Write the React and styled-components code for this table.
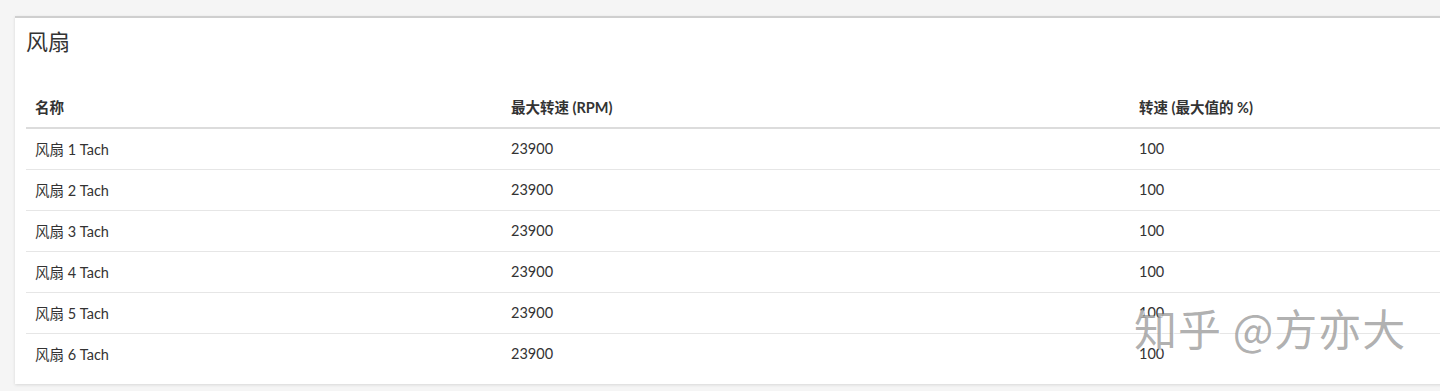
import styled, { createGlobalStyle } from "styled-components";

const GlobalStyle = createGlobalStyle`
    body {
        margin: 0;
        background: #f5f5f5;
        font-family: Lato, "Noto Sans CJK SC", sans-serif;
        color: #333;
    }
`

const fans = [1, 2, 3, 4, 5, 6].map((n) => ({
    name: `风扇 ${n} Tach`,
    max: 23900,
    speed: 100,
}))

const App = () => {
    return (
        <Page>
            <GlobalStyle />
            <Panel>
                <Title>风扇</Title>
                <Table>
                    <thead>
                        <tr>
                            <HeadCell width={476}>名称</HeadCell>
                            <HeadCell width={628}>最大转速 (RPM)</HeadCell>
                            <HeadCell>转速 (最大值的 %)</HeadCell>
                        </tr>
                    </thead>
                    <tbody>
                        {fans.map((fan) => (
                            <Row key={fan.name}>
                                <Cell>{fan.name}</Cell>
                                <Cell>{fan.max}</Cell>
                                <Cell>{fan.speed}</Cell>
                            </Row>
                        ))}
                    </tbody>
                </Table>
            </Panel>
            <Watermark>知乎 @方亦大</Watermark>
        </Page>
    )
}

const Page = styled.div`
    position: relative;
    padding: 16px 0 5px 15px;
    overflow: hidden;
`

const Panel = styled.div`
    width: 1440px;
    background: #fff;
    border-top: 2px solid #cfcfcf;
    box-shadow: 0 1px 3px rgba(0, 0, 0, 0.12);
    padding: 0 0 10px 11px;
`

const Title = styled.h2`
    margin: 0 0 31px;
    padding-top: 7px;
    font-family: "Noto Sans CJK SC", sans-serif;
    font-size: 22px;
    line-height: 30px;
    font-weight: 400;
    color: #333;
`

const Table = styled.table`
    width: 100%;
    border-collapse: collapse;
    font-size: 14.5px;
`

const HeadCell = styled.th`
    width: ${(p) => (p.width ? `${p.width}px` : "auto")};
    height: 42px;
    padding: 0 9px;
    box-sizing: border-box;
    text-align: left;
    font-weight: 700;
    color: #333;
    border-bottom: 2px solid #dcdcdc;
`

const Row = styled.tr`
    border-top: 1px solid #e6e6e6;
    &:first-child {
        border-top: none;
    }
`

const Cell = styled.td`
    height: 41px;
    padding: 0 9px;
    box-sizing: border-box;
    color: #333;
`

const Watermark = styled.div`
    position: absolute;
    left: 1134px;
    top: 296px;
    font-family: "Noto Sans CJK SC", sans-serif;
    font-size: 43px;
    letter-spacing: 1px;
    color: rgba(110, 110, 110, 0.55);
    text-shadow: 1px 1px 0 rgba(255, 255, 255, 0.8);
    white-space: nowrap;
    pointer-events: none;
`

export default App;
